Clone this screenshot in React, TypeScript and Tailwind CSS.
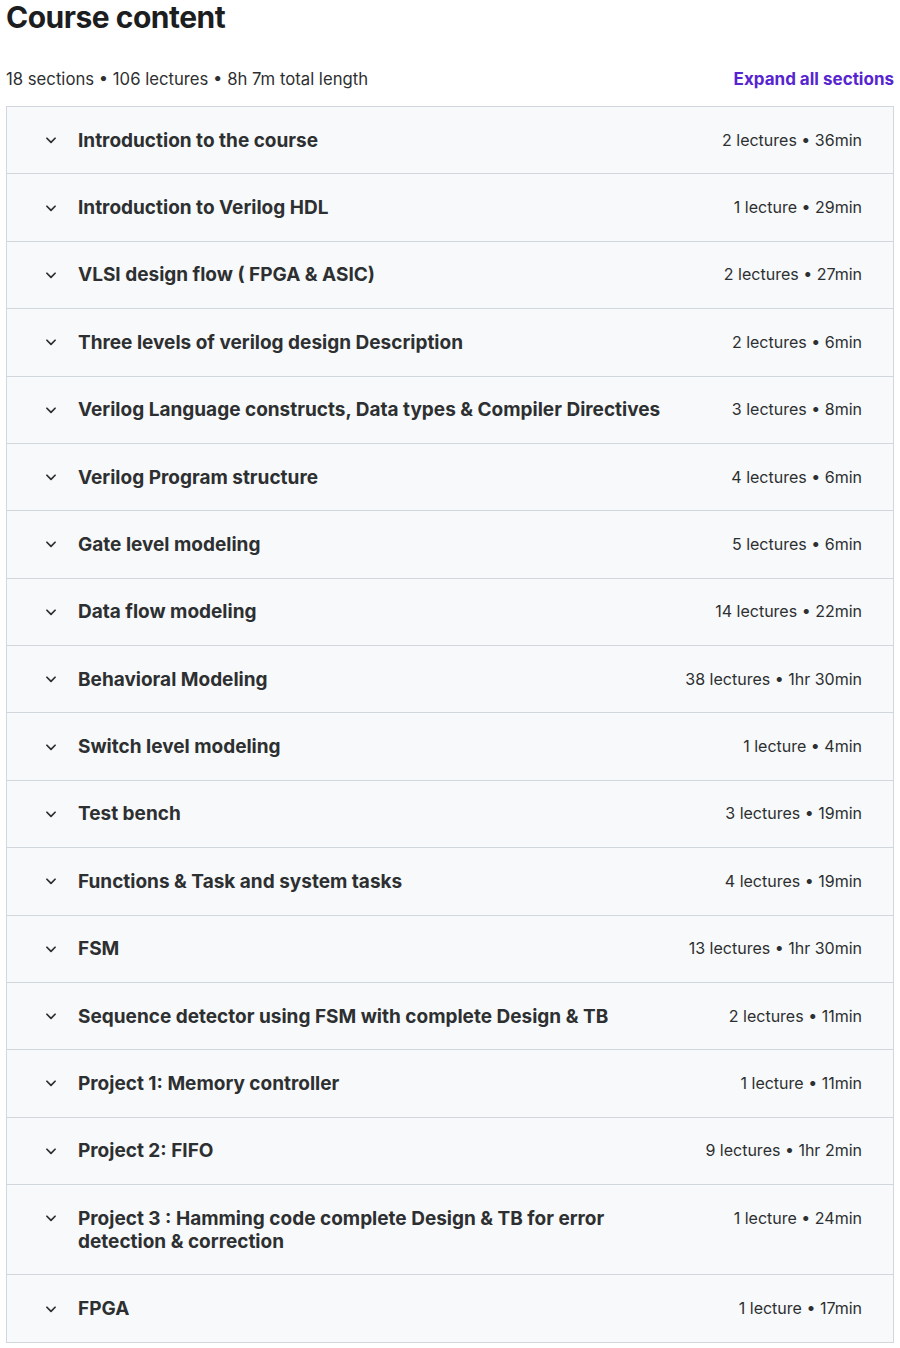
const sections = [
  { title: "Introduction to the course", meta: "2 lectures • 36min" },
  { title: "Introduction to Verilog HDL", meta: "1 lecture • 29min" },
  { title: "VLSI design flow ( FPGA & ASIC)", meta: "2 lectures • 27min" },
  { title: "Three levels of verilog design Description", meta: "2 lectures • 6min" },
  { title: "Verilog Language constructs, Data types & Compiler Directives", meta: "3 lectures • 8min" },
  { title: "Verilog Program structure", meta: "4 lectures • 6min" },
  { title: "Gate level modeling", meta: "5 lectures • 6min" },
  { title: "Data flow modeling", meta: "14 lectures • 22min" },
  { title: "Behavioral Modeling", meta: "38 lectures • 1hr 30min" },
  { title: "Switch level modeling", meta: "1 lecture • 4min" },
  { title: "Test bench", meta: "3 lectures • 19min" },
  { title: "Functions & Task and system tasks", meta: "4 lectures • 19min" },
  { title: "FSM", meta: "13 lectures • 1hr 30min" },
  { title: "Sequence detector using FSM with complete Design & TB", meta: "2 lectures • 11min" },
  { title: "Project 1: Memory controller", meta: "1 lecture • 11min" },
  { title: "Project 2: FIFO", meta: "9 lectures • 1hr 2min" },
  { title: "Project 3 : Hamming code complete Design & TB for error detection & correction", meta: "1 lecture • 24min" },
  { title: "FPGA", meta: "1 lecture • 17min" },
];

function Chevron() {
  return (
    <svg width="14" height="14" viewBox="0 0 24 24" fill="none" stroke="currentColor" strokeWidth="3" strokeLinecap="round" strokeLinejoin="round" className="shrink-0">
      <path d="M5 9l7 7 7-7" />
    </svg>
  );
}

export default function App() {
  return (
    <div className="w-[900px] bg-white text-[#2d2f31] font-['Inter',sans-serif]">
      {/* Header */}
      <h2 className="pl-[6px] text-[30px] font-bold leading-[32px] tracking-[-0.5px] pt-[1px] text-[#1c1d1f]">
        Course content
      </h2>
      <div className="flex items-center justify-between pl-[6px] pr-[6px] mt-[35px] h-[24px]">
        <span className="text-[16.7px]">18 sections • 106 lectures • 8h 7m total length</span>
        <button className="text-[17px] font-bold text-[#5624d0]">Expand all sections</button>
      </div>

      {/* Sections */}
      <div className="ml-[6px] mt-[14px] w-[888px] border border-[#d1d7dc]">
        {sections.map((s, i) => (
          <div
            key={s.title}
            className={`flex items-start bg-[#f7f9fa] pl-[37px] pr-[31px] py-[21.7px] ${i > 0 ? "border-t border-[#d1d7dc]" : ""}`}
          >
            <div className="h-[23px] flex items-center w-[34px]">
              <Chevron />
            </div>
            <div className="flex-1 text-[19px] font-bold leading-[23px] pr-[40px]">{s.title}</div>
            <div className="text-[16px] leading-[23px] whitespace-nowrap">{s.meta}</div>
          </div>
        ))}
      </div>
    </div>
  );
}
